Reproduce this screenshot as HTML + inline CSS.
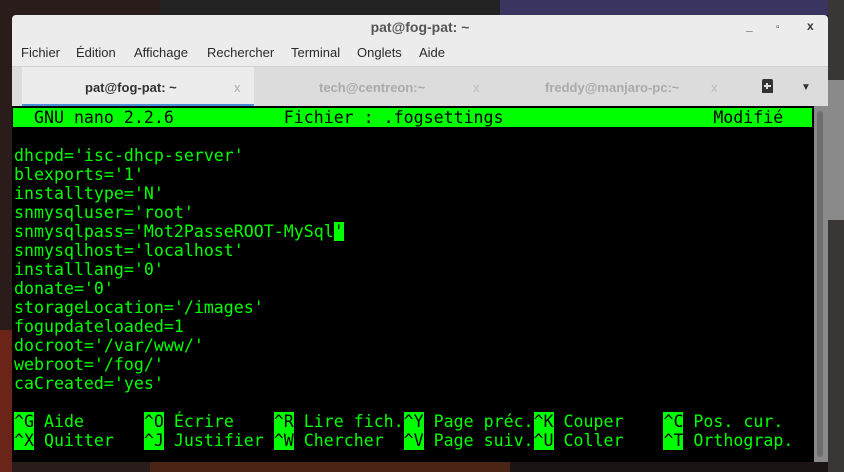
<!DOCTYPE html>
<html><head><meta charset="utf-8"><style>
*{margin:0;padding:0;box-sizing:border-box}
body{width:844px;height:472px;overflow:hidden;position:relative;background:#1a1414;font-family:"Liberation Sans","DejaVu Sans",sans-serif}
.bg{position:absolute}
.win{position:absolute;left:12px;top:15px;width:816px;height:447px;background:#ececec;border-radius:4px 4px 0 0;overflow:hidden}
.title{position:absolute;left:0;top:0;width:100%;height:28px;text-align:center;line-height:20px;padding-top:0;font-weight:bold;font-size:14px;color:#555}
.ctl{position:absolute;top:4px;font-size:12px;color:#333;font-weight:bold}
.m{position:absolute;top:30px;font-size:13px;color:#2a2a2a}
.tabs{position:absolute;top:51px;left:0;width:100%;height:40px;background:#dcdcdc;border-top:1px solid #d0d0d0}
.t{position:absolute;top:13px;font-size:13px;font-weight:bold}
.term{position:absolute;left:0;top:91px;width:802px;height:356px;background:#000;font-family:"DejaVu Sans Mono",monospace;font-size:16.6px;color:#00ff00;white-space:pre}
.ln{position:absolute;left:2px;height:19px;line-height:19px}
.g{background:#00ff00;color:#000}
.sb{position:absolute;left:802px;top:91px;width:14px;height:356px;background:#8a8a8a}
.th{position:absolute;left:805px;top:96px;width:6px;height:346px;background:#6e6e6e;border-radius:3px}
</style></head><body>
<div class="bg" style="left:0;top:0;width:160px;height:472px;background:#2a1c1a"></div>
<div class="bg" style="left:0;top:330px;width:12px;height:142px;background:#6a2418"></div>
<div class="bg" style="left:160px;top:0;width:340px;height:15px;background:#222"></div>
<div class="bg" style="left:500px;top:0;width:344px;height:15px;background:#3a3560"></div>
<div class="bg" style="left:828px;top:0;width:16px;height:472px;background:#3b3636"></div>
<div class="bg" style="left:828px;top:80px;width:16px;height:140px;background:#8a8a8a"></div>
<div class="bg" style="left:150px;top:462px;width:360px;height:10px;background:#4a2414"></div>
<div class="win">
<div class="title" style="top:2px">pat@fog-pat: ~</div>
<div class="ctl" style="left:734px">_</div><div class="ctl" style="left:764px;font-size:10px;top:7px">▫</div><div class="ctl" style="left:795px">x</div>
<div class="m" style="left:9px">Fichier</div><div class="m" style="left:64px">Édition</div><div class="m" style="left:122px">Affichage</div><div class="m" style="left:195px">Rechercher</div><div class="m" style="left:279px">Terminal</div><div class="m" style="left:345px">Onglets</div><div class="m" style="left:407px">Aide</div>
<div class="tabs">
<div style="position:absolute;left:10px;top:0;width:232px;height:40px;background:#ececec;border-bottom:3px solid #4a90d9"></div>
<div class="t" style="left:73px;color:#333">pat@fog-pat: ~</div>
<div class="t" style="left:222px;color:#aaa;font-weight:normal">x</div>
<div class="t" style="left:307px;color:#aaa">tech@centreon:~</div>
<div class="t" style="left:461px;color:#bbb;font-weight:normal">x</div>
<div class="t" style="left:533px;color:#aaa">freddy@manjaro-pc:~</div>
<div class="t" style="left:699px;color:#bbb;font-weight:normal">x</div>
<div style="position:absolute;left:750px;top:12px;width:11px;height:14px;background:#333;border-radius:2px 2px 0 0"></div>
<div style="position:absolute;left:752px;top:18px;width:7px;height:2px;background:#ddd"></div>
<div style="position:absolute;left:754px;top:16px;width:2px;height:6px;background:#ddd"></div>
<div class="t" style="left:789px;color:#333;font-size:10px;top:15px">▼</div>
</div>
<div class="term">
<div style="position:absolute;left:0;top:1px;width:801px;height:21px;background:#00ff00;border:1px solid #000"></div>
<div class="ln" style="top:2px;color:#000">  GNU nano 2.2.6           Fichier : .fogsettings                     Modifié</div>
<div class="ln" style="top:40px">dhcpd='isc-dhcp-server'</div>
<div class="ln" style="top:59px">blexports='1'</div>
<div class="ln" style="top:78px">installtype='N'</div>
<div class="ln" style="top:97px">snmysqluser='root'</div>
<div class="ln" style="top:116px">snmysqlpass='Mot2PasseROOT-MySql<span class="g">'</span></div>
<div class="ln" style="top:135px">snmysqlhost='localhost'</div>
<div class="ln" style="top:154px">installlang='0'</div>
<div class="ln" style="top:173px">donate='0'</div>
<div class="ln" style="top:192px">storageLocation='/images'</div>
<div class="ln" style="top:211px">fogupdateloaded=1</div>
<div class="ln" style="top:230px">docroot='/var/www/'</div>
<div class="ln" style="top:249px">webroot='/fog/'</div>
<div class="ln" style="top:268px">caCreated='yes'</div>
<div class="ln" style="top:306px"><span class="g">^G</span> Aide      <span class="g">^O</span> Écrire    <span class="g">^R</span> Lire fich.<span class="g">^Y</span> Page préc.<span class="g">^K</span> Couper    <span class="g">^C</span> Pos. cur.</div>
<div class="ln" style="top:325px"><span class="g">^X</span> Quitter   <span class="g">^J</span> Justifier <span class="g">^W</span> Chercher  <span class="g">^V</span> Page suiv.<span class="g">^U</span> Coller    <span class="g">^T</span> Orthograp.</div>
</div>
<div class="sb"></div><div class="th"></div>
</div>
</body></html>
